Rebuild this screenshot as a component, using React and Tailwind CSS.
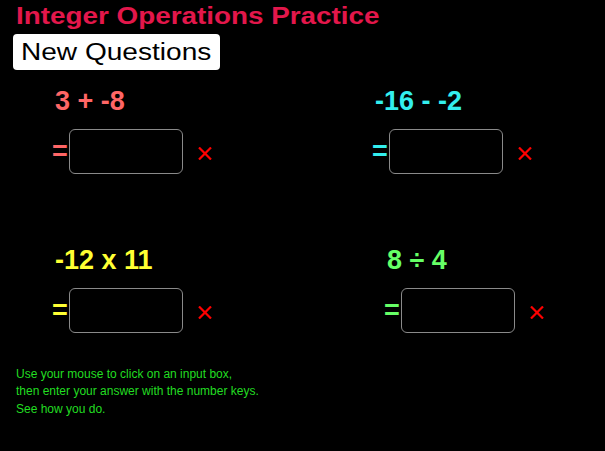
import React from 'react'

const problemas = [
  [
    { texto: '3 + -8', cor: 'text-[#ff6666]', ml: 'ml-[52px]' },
    { texto: '-16 - -2', cor: 'text-[#33eeee]', ml: 'ml-[160px]' },
  ],
  [
    { texto: '-12 x 11', cor: 'text-[#ffff33]', ml: 'ml-[52px]' },
    { texto: '8 ÷ 4', cor: 'text-[#66ff66]', ml: 'ml-[172px]' },
  ],
]

function Errado() {
  return (
    <svg width="14" height="13" viewBox="0 0 14 13" className="ml-[15px] mt-[4px] shrink-0">
      <path d="M1 0.5 L13 12.5 M13 0.5 L1 12.5" stroke="#ff0000" strokeWidth="2.2" fill="none" />
    </svg>
  )
}

function Problema({ texto, cor, ml }) {
  return (
    <div className={`flex flex-col ${ml}`}>
      <p className={`ml-[3px] text-[27px] font-bold leading-[32px] ${cor}`}>{texto}</p>
      <div className="mt-[12px] flex items-center">
        <span className={`w-[17px] text-[27px] font-bold leading-[45px] ${cor}`}>=</span>
        <input
          type="text"
          className="h-[45px] w-[114px] rounded-[6px] border border-[#8a8a8a] bg-black px-2 text-[20px] text-white outline-none"
        />
        <Errado />
      </div>
    </div>
  )
}

export default function App() {
  return (
    <div className="h-[451px] w-[605px] overflow-hidden bg-black font-['Liberation_Sans',Arial,sans-serif]">
      <div className="pt-[2px] pl-[15.5px]">
        <h1 className="inline-block origin-left scale-x-[1.21] whitespace-nowrap text-[23px] font-bold leading-[28px] text-[#e3174b]">
          Integer Operations Practice
        </h1>
      </div>

      <button
        type="button"
        className="ml-[13px] mt-[3px] flex h-[36px] w-[207px] items-center rounded-[4px] bg-white pb-[1px] pl-[8px]"
      >
        <span className="inline-block origin-left scale-x-[1.22] whitespace-nowrap text-[23px] leading-[26px] text-black">
          New Questions
        </span>
      </button>

      <div className="mt-[14.5px] flex">
        {problemas[0].map((p) => (
          <Problema key={p.texto} {...p} />
        ))}
      </div>

      <div className="mt-[70px] flex">
        {problemas[1].map((p) => (
          <Problema key={p.texto} {...p} />
        ))}
      </div>

      <div className="ml-[16px] mt-[33px] text-[12px] leading-[17.5px] text-[#22dd22]">
        <p>Use your mouse to click on an input box,</p>
        <p>then enter your answer with the number keys.</p>
        <p>See how you do.</p>
      </div>
    </div>
  )
}
